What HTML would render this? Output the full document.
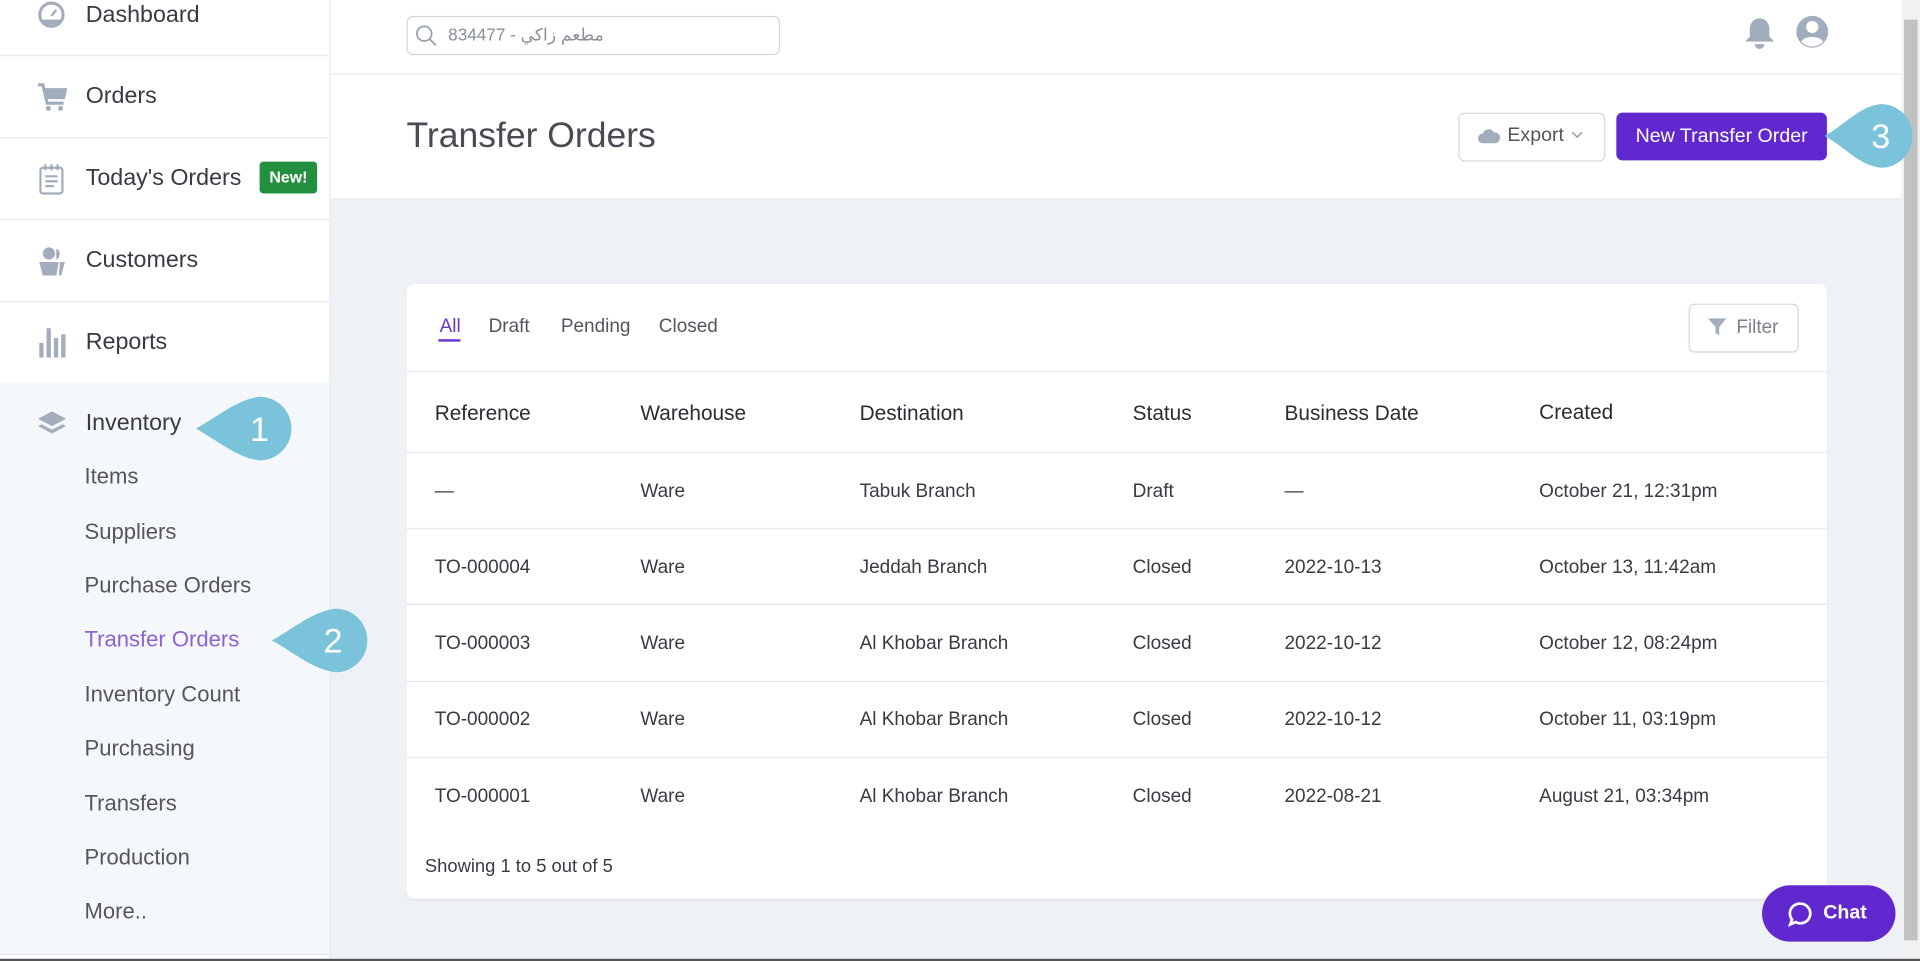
<!DOCTYPE html>
<html><head><meta charset="utf-8"><style>
html,body{margin:0;padding:0;width:1920px;height:961px;overflow:hidden;background:#eef2f6}
#w{position:absolute;left:0;top:0;width:1568px;height:785px;transform:scale(1.22449);transform-origin:0 0;font-family:"Liberation Sans","Noto Sans CJK SC",sans-serif;color:#3a3a44;background:#eef2f6;overflow:hidden}
.a{position:absolute}
.sb{left:0;top:0;width:269px;height:785px;background:#fff;border-right:1px solid #e6e8ef}
.nav{position:absolute;left:0;width:269px;border-bottom:1px solid #e6e8ef;font-size:19px}
.nav span{position:absolute;left:70px}
.sub{position:absolute;left:69px;font-size:18px;color:#55555f}
.th{position:absolute;font-size:17px;color:#2c2c34}
.td{position:absolute;font-size:15.5px;color:#3a3a44}
.row{position:absolute;left:332px;width:1160px;border-top:1px solid #e8eaf0}
</style></head><body><div id="w">
<!-- sidebar -->
<div class="a sb"></div>
<div class="a" style="left:0;top:312px;width:269px;height:468px;background:#f5f8fb"></div>
<div class="nav" style="top:-22px;height:67px"><svg class="a" style="left:31px;top:23px" width="22" height="22" viewBox="0 0 22 22"><circle cx="11" cy="11" r="9.5" fill="none" stroke="#a1acbd" stroke-width="2.5"/><path d="M4 17h14" stroke="#a1acbd" stroke-width="4"/><path d="M11 12l4-5" stroke="#a1acbd" stroke-width="2"/></svg><span style="top:24px">Dashboard</span></div>
<div class="nav" style="top:45px;height:67px"><svg class="a" style="left:31px;top:22px" width="24" height="24" viewBox="0 0 24 24"><path d="M0 1h5l1 4h18l-2 9H8l0.5 2H21v2.5H6.5L3 3.5H0z" fill="#a1acbd"/><circle cx="8.5" cy="21.5" r="2" fill="#a1acbd"/><circle cx="18.5" cy="21.5" r="2" fill="#a1acbd"/></svg><span style="top:23px">Orders</span></div>
<div class="nav" style="top:112px;height:67px"><svg class="a" style="left:32px;top:22px" width="20" height="25" viewBox="0 0 20 25"><rect x="1" y="3" width="18" height="21" rx="2" fill="none" stroke="#a1acbd" stroke-width="1.8"/><path d="M5 0v5M10 0v5M15 0v5M5 10h10M5 14h10M5 18h7" stroke="#a1acbd" stroke-width="1.8"/></svg><span style="top:23px">Today's Orders</span><div class="a" style="left:212px;top:20px;width:47px;height:26px;background:#23903f;border-radius:3px;color:#fff;font-size:13px;font-weight:bold;line-height:26px;text-align:center">New!</div></div>
<div class="nav" style="top:179px;height:67px"><svg class="a" style="left:32px;top:22px" width="22" height="24" viewBox="0 0 22 24"><circle cx="8" cy="6" r="5" fill="#a1acbd"/><path d="M14 2a5 5 0 0 1 0 9" fill="#a1acbd"/><path d="M0 13h16l-2 11H3z" fill="#a1acbd"/><path d="M17 13h4l-3 11h-2z" fill="#a1acbd"/></svg><span style="top:23px">Customers</span></div>
<div class="nav" style="top:246px;height:66px;border-bottom:none"><svg class="a" style="left:32px;top:22px" width="22" height="24" viewBox="0 0 22 24"><rect x="0" y="12" width="3.5" height="12" fill="#a1acbd"/><rect x="6" y="0" width="3.5" height="24" fill="#a1acbd"/><rect x="12" y="8" width="3.5" height="16" fill="#a1acbd"/><rect x="18" y="5" width="3.5" height="19" fill="#a1acbd"/></svg><span style="top:23px">Reports</span></div>
<svg class="a" style="left:31px;top:336px" width="23" height="21" viewBox="0 0 23 21"><path d="M11.5 0L23 6l-11.5 6L0 6z" fill="#a1acbd"/><path d="M0 12l3-1.5 8.5 4.5 8.5-4.5 3 1.5-11.5 6z" fill="#a1acbd"/></svg>
<div class="a" style="left:70px;top:335px;font-size:19px">Inventory</div>
<div class="sub" style="top:379px">Items</div>
<div class="sub" style="top:424px">Suppliers</div>
<div class="sub" style="top:468px">Purchase Orders</div>
<div class="sub" style="top:512px;color:#8c62d6">Transfer Orders</div>
<div class="sub" style="top:557px">Inventory Count</div>
<div class="sub" style="top:601px">Purchasing</div>
<div class="sub" style="top:646px">Transfers</div>
<div class="sub" style="top:690px">Production</div>
<div class="sub" style="top:734px">More..</div>
<div class="a" style="left:0;top:779px;width:270px;height:1px;background:#e6e8ef"></div>
<!-- callouts -->
<svg class="a" style="left:158px;top:322px" width="84" height="56" viewBox="0 0 84 56"><path d="M2 28C20 18 36 4 54 2A26 26 0 1 1 54 54C36 52 20 38 2 28z" fill="#7ac3da"/><text x="54" y="38" font-size="28" fill="#fff" font-family="Liberation Sans" text-anchor="middle">1</text></svg>
<svg class="a" style="left:220px;top:495px" width="84" height="56" viewBox="0 0 84 56"><path d="M2 28C20 18 36 4 54 2A26 26 0 1 1 54 54C36 52 20 38 2 28z" fill="#7ac3da"/><text x="52" y="38" font-size="28" fill="#fff" font-family="Liberation Sans" text-anchor="middle">2</text></svg>
<!-- topbar -->
<div class="a" style="left:270px;top:0;width:1283px;height:60px;background:#fff;border-bottom:1px solid #e6e8ef"></div>
<div class="a" style="left:332px;top:13px;width:303px;height:30px;border:1px solid #d3d6dd;border-radius:5px;background:#fff"></div>
<svg class="a" style="left:339px;top:20px" width="18" height="18" viewBox="0 0 18 18"><circle cx="7.5" cy="7.5" r="6" fill="none" stroke="#9aa3b1" stroke-width="1.5"/><path d="M12 12l5 5" stroke="#9aa3b1" stroke-width="1.5"/></svg>
<div class="a" style="left:366px;top:20px;font-size:14px;color:#8a8f99">مطعم زاكي - 834477</div>
<svg class="a" style="left:1425px;top:14px" width="24" height="26" viewBox="0 0 24 26"><path d="M12 1c-5 0-8 4-8 9v6l-3 3v1h22v-1l-3-3v-6c0-5-3-9-8-9z" fill="#a1acbd"/><path d="M8 22a4 4 0 0 0 8 0z" fill="#a1acbd"/></svg>
<svg class="a" style="left:1466px;top:12px" width="28" height="28" viewBox="0 0 28 28"><circle cx="14" cy="14" r="13" fill="#a1acbd"/><circle cx="14" cy="10" r="5" fill="#fff"/><path d="M5 22c3-5 15-5 18 0a12 12 0 0 1-18 0z" fill="#fff"/></svg>
<!-- header -->
<div class="a" style="left:270px;top:61px;width:1283px;height:101px;background:#fff;border-bottom:1px solid #e6e8ef"></div>
<div class="a" style="left:332px;top:95px;font-size:29px;color:#4a4a54">Transfer Orders</div>
<!-- scrollbar -->
<div class="a" style="left:1553px;top:0;width:15px;height:785px;background:#f1f1f1"></div>
<div class="a" style="left:1555px;top:16px;width:11px;height:752px;background:#c1c1c1"></div>
<div class="a" style="left:1191px;top:92px;width:118px;height:38px;border:1px solid #d3d8e0;border-radius:5px;background:#fff"></div>
<svg class="a" style="left:1207px;top:104px" width="18" height="14" viewBox="0 0 18 14"><path d="M4 13a4 4 0 0 1 0-8 5 5 0 0 1 9-1 4.5 4.5 0 0 1 1 9z" fill="#a1acbd"/></svg>
<div class="a" style="left:1231px;top:102px;font-size:16px;color:#55555f">Export</div>
<svg class="a" style="left:1283px;top:107px" width="10" height="7" viewBox="0 0 10 7"><path d="M1 1l4 4 4-4" fill="none" stroke="#9aa3b1" stroke-width="1.3"/></svg>
<div class="a" style="left:1320px;top:92px;width:172px;height:39px;background:#6128cf;border-radius:5px;color:#fff;font-size:16px;line-height:39px;text-align:center">New Transfer Order</div>
<svg class="a" style="left:1488px;top:83px" width="80" height="56" viewBox="0 0 80 56"><path d="M2 28C20 18 30 4 48 2A26 26 0 1 1 48 54C30 52 20 38 2 28z" fill="#7ac3da"/><text x="48" y="38" font-size="28" fill="#fff" font-family="Liberation Sans" text-anchor="middle">3</text></svg>
<!-- card -->
<div class="a" style="left:332px;top:232px;width:1160px;height:502px;background:#fff;border-radius:6px;box-shadow:0 1px 2px rgba(0,0,0,.06)"></div>
<div class="a" style="left:359px;top:258px;font-size:15.5px;color:#6a35d0">All</div>
<div class="a" style="left:358px;top:277px;width:18px;height:2px;background:#6a35d0"></div>
<div class="a" style="left:399px;top:258px;font-size:15.5px;color:#55555f">Draft</div>
<div class="a" style="left:458px;top:258px;font-size:15.5px;color:#55555f">Pending</div>
<div class="a" style="left:538px;top:258px;font-size:15.5px;color:#55555f">Closed</div>
<div class="a" style="left:1379px;top:248px;width:88px;height:38px;border:1px solid #d3d8e0;border-radius:5px"></div>
<svg class="a" style="left:1395px;top:260px" width="15" height="15" viewBox="0 0 15 15"><path d="M0 0h15L9 7v7L6 12V7z" fill="#a1acbd"/></svg>
<div class="a" style="left:1418px;top:259px;font-size:15.5px;color:#7a7f89">Filter</div>
<div class="row" style="top:303px"></div>
<div class="th" style="left:355px;top:328px">Reference</div>
<div class="th" style="left:523px;top:328px">Warehouse</div>
<div class="th" style="left:702px;top:328px">Destination</div>
<div class="th" style="left:925px;top:328px">Status</div>
<div class="th" style="left:1049px;top:328px">Business Date</div>
<div class="th" style="left:1257px;top:327px">Created</div>
<div class="row" style="top:369px"></div>
<div class="td" style="left:355px;top:393px">—</div><div class="td" style="left:523px;top:393px">Ware</div><div class="td" style="left:702px;top:393px">Tabuk Branch</div><div class="td" style="left:925px;top:393px">Draft</div><div class="td" style="left:1049px;top:393px">—</div><div class="td" style="left:1257px;top:393px">October 21, 12:31pm</div>
<div class="row" style="top:431px"></div>
<div class="td" style="left:355px;top:455px">TO-000004</div><div class="td" style="left:523px;top:455px">Ware</div><div class="td" style="left:702px;top:455px">Jeddah Branch</div><div class="td" style="left:925px;top:455px">Closed</div><div class="td" style="left:1049px;top:455px">2022-10-13</div><div class="td" style="left:1257px;top:455px">October 13, 11:42am</div>
<div class="row" style="top:493px;border-color:#dfe2ea"></div>
<div class="td" style="left:355px;top:517px">TO-000003</div><div class="td" style="left:523px;top:517px">Ware</div><div class="td" style="left:702px;top:517px">Al Khobar Branch</div><div class="td" style="left:925px;top:517px">Closed</div><div class="td" style="left:1049px;top:517px">2022-10-12</div><div class="td" style="left:1257px;top:517px">October 12, 08:24pm</div>
<div class="row" style="top:556px"></div>
<div class="td" style="left:355px;top:579px">TO-000002</div><div class="td" style="left:523px;top:579px">Ware</div><div class="td" style="left:702px;top:579px">Al Khobar Branch</div><div class="td" style="left:925px;top:579px">Closed</div><div class="td" style="left:1049px;top:579px">2022-10-12</div><div class="td" style="left:1257px;top:579px">October 11, 03:19pm</div>
<div class="row" style="top:618px"></div>
<div class="td" style="left:355px;top:642px">TO-000001</div><div class="td" style="left:523px;top:642px">Ware</div><div class="td" style="left:702px;top:642px">Al Khobar Branch</div><div class="td" style="left:925px;top:642px">Closed</div><div class="td" style="left:1049px;top:642px">2022-08-21</div><div class="td" style="left:1257px;top:642px">August 21, 03:34pm</div>
<div class="td" style="left:347px;top:699px;font-size:15px">Showing 1 to 5 out of 5</div>
<!-- chat -->
<div class="a" style="left:1439px;top:723px;width:109px;height:46px;background:#6128cf;border-radius:23px"></div>
<svg class="a" style="left:1460px;top:736px" width="21" height="21" viewBox="0 0 21 21"><path d="M10.5 2a8 8 0 1 1-4 15L2 19l1.5-4A8 8 0 0 1 10.5 2z" fill="none" stroke="#fff" stroke-width="2.2"/></svg>
<div class="a" style="left:1489px;top:737px;font-size:16px;font-weight:bold;color:#fff">Chat</div>
<div class="a" style="left:0;top:783px;width:1568px;height:2px;background:#555"></div>
</div></body></html>
